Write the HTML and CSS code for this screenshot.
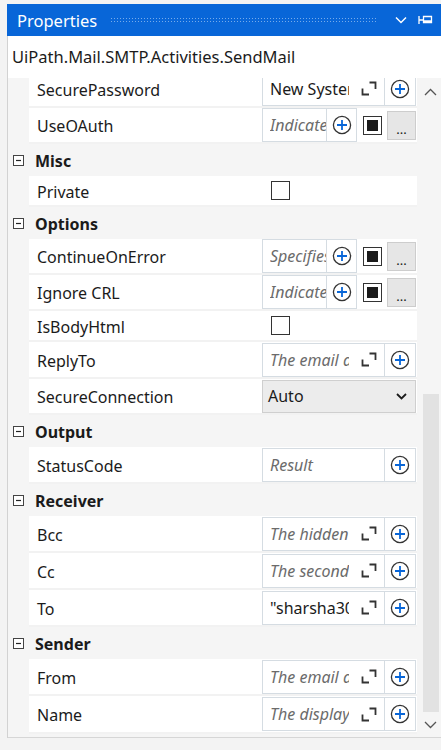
FILE: index.html
```html
<!DOCTYPE html>
<html>
<head>
<meta charset="utf-8">
<link rel="stylesheet" href="styles.css">
</head>
<body>
<div class="window">
  <div class="titlebar">
    <span class="title">Properties</span>
    <span class="grip"></span>
    <svg class="hdr-chev" width="12" height="8" viewBox="0 0 12 8"><path d="M1 1.5l5 5 5-5" fill="none" stroke="#fff" stroke-width="1.5"/></svg>
    <svg class="pin" width="15" height="10" viewBox="0 0 15 10"><path d="M1 1v8M1 5h4.5M5.5 1.5h8v6h-8zM5.5 6h8" fill="none" stroke="#fff" stroke-width="1.3"/></svg>
  </div>
  <div class="panel">
    <div class="typename">UiPath.Mail.SMTP.Activities.SendMail</div>
    <div class="grid">
      <div class="rows">
        <div class="list">
          <div class="row">
            <div class="name">SecurePassword</div>
            <div class="val">
              <div class="tb"><span class="txt">New System.Security.SecureString</span><svg class="exp" width="16" height="15" viewBox="0 0 16 15"><path d="M1.5 7.5v6h6.5M8.5 1.5h6v6.5" fill="none" stroke="#333" stroke-width="1.8"/></svg></div>
              <div class="pb"><svg width="20" height="20" viewBox="0 0 20 20"><circle cx="10" cy="10" r="8.6" fill="none" stroke="#333" stroke-width="1.3"/><path d="M10 5v10M5 10h10" stroke="#0866d8" stroke-width="1.8"/></svg></div>
            </div>
          </div>
          <div class="row btnrow">
            <div class="name">UseOAuth</div>
            <div class="val">
              <div class="tb short"><span class="txt ph">Indicates whether to use OAuth</span></div>
              <div class="pb"><svg width="20" height="20" viewBox="0 0 20 20"><circle cx="10" cy="10" r="8.6" fill="none" stroke="#333" stroke-width="1.3"/><path d="M10 5v10M5 10h10" stroke="#0866d8" stroke-width="1.8"/></svg></div>
              <div class="cbx filled"><span></span></div>
              <div class="dots">...</div>
            </div>
          </div>
          <div class="cat"><svg class="minus" width="11" height="11" viewBox="0 0 11 11"><rect x="0.5" y="0.5" width="10" height="10" fill="#fff" stroke="#444"/><path d="M3 5.5h5" stroke="#222" stroke-width="1.2"/></svg><span>Misc</span></div>
          <div class="row cbrow">
            <div class="name">Private</div>
            <div class="val"><div class="cbx"></div></div>
          </div>
          <div class="cat"><svg class="minus" width="11" height="11" viewBox="0 0 11 11"><rect x="0.5" y="0.5" width="10" height="10" fill="#fff" stroke="#444"/><path d="M3 5.5h5" stroke="#222" stroke-width="1.2"/></svg><span>Options</span></div>
          <div class="row btnrow">
            <div class="name">ContinueOnError</div>
            <div class="val">
              <div class="tb short"><span class="txt ph">Specifies if the automation should continue</span></div>
              <div class="pb"><svg width="20" height="20" viewBox="0 0 20 20"><circle cx="10" cy="10" r="8.6" fill="none" stroke="#333" stroke-width="1.3"/><path d="M10 5v10M5 10h10" stroke="#0866d8" stroke-width="1.8"/></svg></div>
              <div class="cbx filled"><span></span></div>
              <div class="dots">...</div>
            </div>
          </div>
          <div class="row btnrow">
            <div class="name">Ignore CRL</div>
            <div class="val">
              <div class="tb short"><span class="txt ph">Indicates whether to ignore CRL</span></div>
              <div class="pb"><svg width="20" height="20" viewBox="0 0 20 20"><circle cx="10" cy="10" r="8.6" fill="none" stroke="#333" stroke-width="1.3"/><path d="M10 5v10M5 10h10" stroke="#0866d8" stroke-width="1.8"/></svg></div>
              <div class="cbx filled"><span></span></div>
              <div class="dots">...</div>
            </div>
          </div>
          <div class="row cbrow">
            <div class="name">IsBodyHtml</div>
            <div class="val"><div class="cbx"></div></div>
          </div>
          <div class="row">
            <div class="name">ReplyTo</div>
            <div class="val">
              <div class="tb"><span class="txt ph">The email address to reply to</span><svg class="exp" width="16" height="15" viewBox="0 0 16 15"><path d="M1.5 7.5v6h6.5M8.5 1.5h6v6.5" fill="none" stroke="#333" stroke-width="1.8"/></svg></div>
              <div class="pb"><svg width="20" height="20" viewBox="0 0 20 20"><circle cx="10" cy="10" r="8.6" fill="none" stroke="#333" stroke-width="1.3"/><path d="M10 5v10M5 10h10" stroke="#0866d8" stroke-width="1.8"/></svg></div>
            </div>
          </div>
          <div class="row comborow">
            <div class="name">SecureConnection</div>
            <div class="val">
              <div class="combo"><span>Auto</span><svg width="11" height="7" viewBox="0 0 11 7"><path d="M1 1l4.5 4.5L10 1" fill="none" stroke="#1b1b1b" stroke-width="1.8"/></svg></div>
            </div>
          </div>
          <div class="cat"><svg class="minus" width="11" height="11" viewBox="0 0 11 11"><rect x="0.5" y="0.5" width="10" height="10" fill="#fff" stroke="#444"/><path d="M3 5.5h5" stroke="#222" stroke-width="1.2"/></svg><span>Output</span></div>
          <div class="row">
            <div class="name">StatusCode</div>
            <div class="val">
              <div class="tb"><span class="txt ph">Result</span></div>
              <div class="pb"><svg width="20" height="20" viewBox="0 0 20 20"><circle cx="10" cy="10" r="8.6" fill="none" stroke="#333" stroke-width="1.3"/><path d="M10 5v10M5 10h10" stroke="#0866d8" stroke-width="1.8"/></svg></div>
            </div>
          </div>
          <div class="cat"><svg class="minus" width="11" height="11" viewBox="0 0 11 11"><rect x="0.5" y="0.5" width="10" height="10" fill="#fff" stroke="#444"/><path d="M3 5.5h5" stroke="#222" stroke-width="1.2"/></svg><span>Receiver</span></div>
          <div class="row">
            <div class="name">Bcc</div>
            <div class="val">
              <div class="tb"><span class="txt ph">The hidden recipients</span><svg class="exp" width="16" height="15" viewBox="0 0 16 15"><path d="M1.5 7.5v6h6.5M8.5 1.5h6v6.5" fill="none" stroke="#333" stroke-width="1.8"/></svg></div>
              <div class="pb"><svg width="20" height="20" viewBox="0 0 20 20"><circle cx="10" cy="10" r="8.6" fill="none" stroke="#333" stroke-width="1.3"/><path d="M10 5v10M5 10h10" stroke="#0866d8" stroke-width="1.8"/></svg></div>
            </div>
          </div>
          <div class="row">
            <div class="name">Cc</div>
            <div class="val">
              <div class="tb"><span class="txt ph">The secondary recipients</span><svg class="exp" width="16" height="15" viewBox="0 0 16 15"><path d="M1.5 7.5v6h6.5M8.5 1.5h6v6.5" fill="none" stroke="#333" stroke-width="1.8"/></svg></div>
              <div class="pb"><svg width="20" height="20" viewBox="0 0 20 20"><circle cx="10" cy="10" r="8.6" fill="none" stroke="#333" stroke-width="1.3"/><path d="M10 5v10M5 10h10" stroke="#0866d8" stroke-width="1.8"/></svg></div>
            </div>
          </div>
          <div class="row">
            <div class="name">To</div>
            <div class="val">
              <div class="tb"><span class="txt">"sharsha30@gmail.com"</span><svg class="exp" width="16" height="15" viewBox="0 0 16 15"><path d="M1.5 7.5v6h6.5M8.5 1.5h6v6.5" fill="none" stroke="#333" stroke-width="1.8"/></svg></div>
              <div class="pb"><svg width="20" height="20" viewBox="0 0 20 20"><circle cx="10" cy="10" r="8.6" fill="none" stroke="#333" stroke-width="1.3"/><path d="M10 5v10M5 10h10" stroke="#0866d8" stroke-width="1.8"/></svg></div>
            </div>
          </div>
          <div class="cat"><svg class="minus" width="11" height="11" viewBox="0 0 11 11"><rect x="0.5" y="0.5" width="10" height="10" fill="#fff" stroke="#444"/><path d="M3 5.5h5" stroke="#222" stroke-width="1.2"/></svg><span>Sender</span></div>
          <div class="row">
            <div class="name">From</div>
            <div class="val">
              <div class="tb"><span class="txt ph">The email address of the sender</span><svg class="exp" width="16" height="15" viewBox="0 0 16 15"><path d="M1.5 7.5v6h6.5M8.5 1.5h6v6.5" fill="none" stroke="#333" stroke-width="1.8"/></svg></div>
              <div class="pb"><svg width="20" height="20" viewBox="0 0 20 20"><circle cx="10" cy="10" r="8.6" fill="none" stroke="#333" stroke-width="1.3"/><path d="M10 5v10M5 10h10" stroke="#0866d8" stroke-width="1.8"/></svg></div>
            </div>
          </div>
          <div class="row last">
            <div class="name">Name</div>
            <div class="val">
              <div class="tb"><span class="txt ph">The display name of the sender</span><svg class="exp" width="16" height="15" viewBox="0 0 16 15"><path d="M1.5 7.5v6h6.5M8.5 1.5h6v6.5" fill="none" stroke="#333" stroke-width="1.8"/></svg></div>
              <div class="pb"><svg width="20" height="20" viewBox="0 0 20 20"><circle cx="10" cy="10" r="8.6" fill="none" stroke="#333" stroke-width="1.3"/><path d="M10 5v10M5 10h10" stroke="#0866d8" stroke-width="1.8"/></svg></div>
            </div>
          </div>
        </div>
      </div>
      <div class="scrollbar">
        <div class="sb-up"><svg width="13" height="8" viewBox="0 0 13 8"><path d="M1 7l5.5-5.5L12 7" fill="none" stroke="#555" stroke-width="1.3"/></svg></div>
        <div class="track"><div class="thumb"></div></div>
        <div class="sb-down"><svg width="13" height="8" viewBox="0 0 13 8"><path d="M1 1l5.5 5.5L12 1" fill="none" stroke="#555" stroke-width="1.3"/></svg></div>
      </div>
    </div>
  </div>
</div>
</body>
</html>
```

FILE: styles.css
```css
* { box-sizing: border-box; }
html, body { margin: 0; padding: 0; }
body {
  width: 441px;
  height: 750px;
  overflow: hidden;
  background: #f3f3f3;
  font-family: "Noto Sans", "Open Sans", sans-serif;
  font-size: 16px;
  color: #1b1b1b;
}
.window { padding: 4px 0 0 7px; }
.titlebar {
  height: 32px;
  background: #0866d8;
  color: #fff;
  display: flex;
  align-items: center;
  padding-left: 10px;
}
.title { font-size: 16.5px; }
.grip {
  flex: 1;
  height: 7px;
  margin: 0 17px 0 13px;
  background-image: radial-gradient(circle, rgba(255,255,255,0.45) 0.7px, transparent 1px);
  background-size: 3px 3px;
}
.hdr-chev { margin-right: 11px; }
.pin { margin-right: 8px; }
.panel {
  background: #fff;
  border-left: 1px solid #d2d2d2;
}
.typename {
  height: 42px;
  line-height: 42px;
  padding-left: 4px;
  font-size: 16.5px;
}
.grid {
  display: flex;
  height: 660px;
  background: #f5f5f5;
  border-bottom: 1px solid #d6d6d6;
}
.rows { width: 409px; overflow: hidden; }
.list { margin-top: -7px; }
.row {
  display: flex;
  height: 37px;
  margin-left: 21px;
  background: #fff;
  border-bottom: 2px solid #f2f2f2;
}
.row.btnrow { height: 36px; }
.row.cbrow { height: 31px; }
.row.comborow { height: 36px; }
.row.last { height: 38px; }
.name {
  width: 233px;
  padding: 2px 0 0 8px;
  display: flex;
  align-items: center;
  white-space: nowrap;
}
.val {
  width: 155px;
  display: flex;
  align-items: center;
}
.tb {
  width: 123px;
  height: 34px;
  border: 1px solid #d5dce2;
  display: flex;
  align-items: center;
  padding-left: 7px;
}
.tb.short { width: 65px; }
.txt {
  flex: 1;
  overflow: hidden;
  white-space: nowrap;
  min-width: 0;
}
.ph { font-style: italic; color: #6b6b6b; }
.exp { margin: 0 7px 0 12px; flex: none; }
.pb {
  width: 31px;
  height: 34px;
  border: 1px solid #d5dce2;
  border-left: none;
  display: flex;
  align-items: center;
  justify-content: center;
}
.btnrow .pb { width: 30px; }
.cbx {
  width: 19px;
  height: 19px;
  border: 1px solid #333;
  background: #fff;
  margin-left: 9px;
  padding: 3px;
}
.cbx.filled { margin-left: 6px; }
.cbx span {
  display: block;
  width: 100%;
  height: 100%;
  background: #1b1b1b;
}
.dots {
  width: 29px;
  height: 29px;
  margin-left: 5px;
  background: #e6e6e6;
  border: 1px solid #cdcdcd;
  text-align: center;
  line-height: 34px;
  font-size: 13px;
}
.combo {
  width: 154px;
  height: 33px;
  background: #ececec;
  border: 1px solid #cfcfcf;
  display: flex;
  align-items: center;
  justify-content: space-between;
  padding: 0 8px 0 5px;
}
.cat {
  height: 32px;
  display: flex;
  align-items: center;
  padding: 1px 0 0 5px;
  font-weight: bold;
}
.minus { margin-right: 11px; flex: none; }
.scrollbar {
  width: 24px;
  display: flex;
  flex-direction: column;
  background: #f5f5f5;
}
.sb-up {
  height: 28px;
  display: flex;
  align-items: center;
  justify-content: center;
  padding-left: 2px;
}
.track {
  flex: 1;
  display: flex;
  flex-direction: column;
  justify-content: flex-end;
  padding-left: 6px;
}
.thumb {
  width: 16px;
  height: 318px;
  background: #e2e2e2;
}
.sb-down {
  height: 25px;
  display: flex;
  align-items: center;
  justify-content: center;
  padding-left: 2px;
}
```
